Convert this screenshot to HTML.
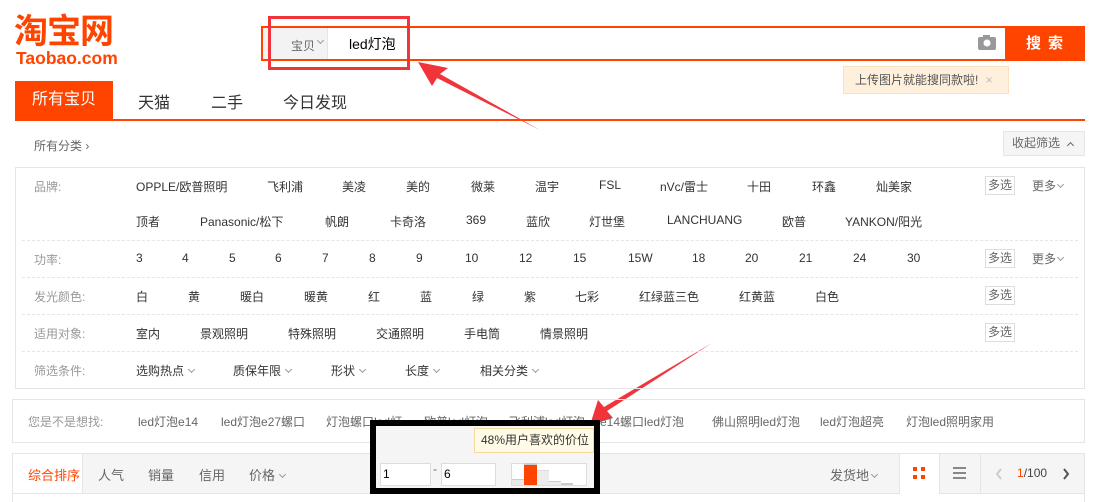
<!DOCTYPE html>
<html><head><meta charset="utf-8"><style>
*{margin:0;padding:0;box-sizing:border-box}
body{width:1095px;height:502px;overflow:hidden;background:#fff;font-family:"Liberation Sans","Noto Sans CJK SC",sans-serif;font-size:12px;color:#333;position:relative}
.a{position:absolute;white-space:nowrap}
.lbl{color:#999}
.dash{position:absolute;left:22px;width:1056px;border-top:1px dashed #e5e5e5}
.ms{position:absolute;left:985px;width:30px;height:19px;border:1px solid #ddd;color:#666;font-size:12px;line-height:17px;text-align:center}
.more{position:absolute;left:1032px;color:#666}
.dn{display:inline-block;width:5px;height:5px;border-right:1px solid #999;border-bottom:1px solid #999;transform:rotate(45deg);vertical-align:3px;margin-left:5px}
.up{display:inline-block;width:5px;height:5px;border-left:1px solid #666;border-top:1px solid #666;transform:rotate(45deg);vertical-align:-1px;margin-left:8px}
</style></head><body>
<!-- logo -->
<div class="a" style="left:14px;top:12px;font-size:34px;font-weight:bold;color:#ff4400;letter-spacing:-1px;line-height:40px">淘宝网</div>
<div class="a" style="left:16px;top:49px;font-size:17.5px;font-weight:bold;color:#ff4400;line-height:18px">Taobao.com</div>
<!-- search -->
<div class="a" style="left:261px;top:26px;width:745px;height:35px;border:2px solid #ff4400;border-right:none"></div>
<div class="a" style="left:263px;top:28px;width:65px;height:31px;background:#f3f3f3;border-right:1px solid #e5e5e5"></div>
<div class="a" style="left:291px;top:37px;color:#666;font-size:12px">宝贝</div>
<div class="a" style="left:318px;top:35px"><span class="dn" style="margin:0"></span></div>
<div class="a" style="left:349px;top:34px;font-size:14px;color:#000">led灯泡</div>
<svg class="a" style="left:978px;top:35px" width="18" height="15"><rect x="0" y="2" width="18" height="13" rx="2" fill="#999"/><rect x="5" y="0" width="7" height="4" fill="#999"/><circle cx="9" cy="8" r="3.5" fill="#fff"/></svg>
<div class="a" style="left:1005px;top:26px;width:80px;height:35px;background:#ff4400;color:#fff;font-size:15px;font-weight:bold;text-align:center;line-height:35px;letter-spacing:7px;padding-left:6px">搜索</div>
<div class="a" style="left:268px;top:16px;width:142px;height:54px;border:3px solid #f0343a"></div>
<div class="a" style="left:843px;top:66px;width:166px;height:28px;background:#fef0dc;border:1px solid #fbe0bb;color:#555;font-size:12px;line-height:26px;padding-left:11px">上传图片就能搜同款啦! <span style="color:#bbb;margin-left:4px">×</span></div>
<svg class="a" style="left:0;top:0" width="1095" height="502"><polygon points="418,62 448,68 440,74 540,130 437,78 432,86" fill="#f0343a"/><polygon points="590,425 598,400 604,407 712,343 607,411 613,418" fill="#f0343a"/></svg>
<!-- tabs -->
<div class="a" style="left:15px;top:81px;width:98px;height:40px;background:#ff4400;color:#fff;font-size:16px;text-align:center;line-height:38px">所有宝贝</div>
<div class="a" style="left:138px;top:89px;font-size:16px;color:#333">天猫</div>
<div class="a" style="left:211px;top:89px;font-size:16px;color:#333">二手</div>
<div class="a" style="left:283px;top:89px;font-size:16px;color:#333">今日发现</div>
<div class="a" style="left:15px;top:119px;width:1070px;height:2px;background:#ff4400"></div>
<div class="a" style="left:34px;top:137px;color:#666">所有分类 ›</div>
<div class="a" style="left:1003px;top:131px;width:82px;height:25px;background:#f5f5f5;border:1px solid #e5e5e5;color:#666;line-height:23px;padding-left:8px">收起筛选<span class="up"></span></div>
<!-- filter -->
<div class="a" style="left:15px;top:167px;width:1070px;height:222px;border:1px solid #e5e5e5"></div>
<div class="a lbl" style="left:34px;top:178px">品牌:</div>
<div class="a" style="left:136px;top:178px">OPPLE/欧普照明</div>
<div class="a" style="left:267px;top:178px">飞利浦</div>
<div class="a" style="left:342px;top:178px">美凌</div>
<div class="a" style="left:406px;top:178px">美的</div>
<div class="a" style="left:471px;top:178px">微莱</div>
<div class="a" style="left:535px;top:178px">温宇</div>
<div class="a" style="left:599px;top:178px">FSL</div>
<div class="a" style="left:660px;top:178px">nVc/雷士</div>
<div class="a" style="left:747px;top:178px">十田</div>
<div class="a" style="left:812px;top:178px">环鑫</div>
<div class="a" style="left:876px;top:178px">灿美家</div>
<div class="ms" style="top:176px">多选</div><div class="more" style="top:177px">更多<span class="dn" style="margin-left:2px"></span></div>
<div class="a" style="left:136px;top:213px">顶者</div>
<div class="a" style="left:200px;top:213px">Panasonic/松下</div>
<div class="a" style="left:325px;top:213px">帆朗</div>
<div class="a" style="left:390px;top:213px">卡奇洛</div>
<div class="a" style="left:466px;top:213px">369</div>
<div class="a" style="left:526px;top:213px">蓝欣</div>
<div class="a" style="left:589px;top:213px">灯世堡</div>
<div class="a" style="left:667px;top:213px">LANCHUANG</div>
<div class="a" style="left:782px;top:213px">欧普</div>
<div class="a" style="left:845px;top:213px">YANKON/阳光</div>
<div class="dash" style="top:240px"></div>
<div class="a lbl" style="left:34px;top:251px">功率:</div>
<div class="a" style="left:136px;top:251px">3</div><div class="a" style="left:182px;top:251px">4</div><div class="a" style="left:229px;top:251px">5</div><div class="a" style="left:275px;top:251px">6</div><div class="a" style="left:322px;top:251px">7</div><div class="a" style="left:369px;top:251px">8</div><div class="a" style="left:416px;top:251px">9</div><div class="a" style="left:465px;top:251px">10</div><div class="a" style="left:519px;top:251px">12</div><div class="a" style="left:573px;top:251px">15</div><div class="a" style="left:628px;top:251px">15W</div><div class="a" style="left:692px;top:251px">18</div><div class="a" style="left:745px;top:251px">20</div><div class="a" style="left:799px;top:251px">21</div><div class="a" style="left:853px;top:251px">24</div><div class="a" style="left:907px;top:251px">30</div>
<div class="ms" style="top:249px">多选</div><div class="more" style="top:250px">更多<span class="dn" style="margin-left:2px"></span></div>
<div class="dash" style="top:277px"></div>
<div class="a lbl" style="left:34px;top:288px">发光颜色:</div>
<div class="a" style="left:136px;top:288px">白</div><div class="a" style="left:188px;top:288px">黄</div><div class="a" style="left:240px;top:288px">暖白</div><div class="a" style="left:304px;top:288px">暖黄</div><div class="a" style="left:368px;top:288px">红</div><div class="a" style="left:420px;top:288px">蓝</div><div class="a" style="left:472px;top:288px">绿</div><div class="a" style="left:524px;top:288px">紫</div><div class="a" style="left:575px;top:288px">七彩</div><div class="a" style="left:639px;top:288px">红绿蓝三色</div><div class="a" style="left:739px;top:288px">红黄蓝</div><div class="a" style="left:815px;top:288px">白色</div>
<div class="ms" style="top:286px">多选</div>
<div class="dash" style="top:314px"></div>
<div class="a lbl" style="left:34px;top:325px">适用对象:</div>
<div class="a" style="left:136px;top:325px">室内</div><div class="a" style="left:200px;top:325px">景观照明</div><div class="a" style="left:288px;top:325px">特殊照明</div><div class="a" style="left:376px;top:325px">交通照明</div><div class="a" style="left:464px;top:325px">手电筒</div><div class="a" style="left:540px;top:325px">情景照明</div>
<div class="ms" style="top:323px">多选</div>
<div class="dash" style="top:351px"></div>
<div class="a lbl" style="left:34px;top:362px">筛选条件:</div>
<div class="a" style="left:136px;top:362px">选购热点<span class="dn"></span></div>
<div class="a" style="left:233px;top:362px">质保年限<span class="dn"></span></div>
<div class="a" style="left:331px;top:362px">形状<span class="dn"></span></div>
<div class="a" style="left:405px;top:362px">长度<span class="dn"></span></div>
<div class="a" style="left:480px;top:362px">相关分类<span class="dn"></span></div>
<!-- suggest -->
<div class="a" style="left:12px;top:399px;width:1073px;height:44px;border:1px solid #e5e5e5"></div>
<div class="a" style="left:28px;top:413px;color:#999">您是不是想找:</div>
<div class="a" style="left:138px;top:413px;color:#666">led灯泡e14</div>
<div class="a" style="left:221px;top:413px;color:#666">led灯泡e27螺口</div>
<div class="a" style="left:326px;top:413px;color:#666">灯泡螺口led灯</div>
<div class="a" style="left:424px;top:413px;color:#666">欧普led灯泡</div>
<div class="a" style="left:509px;top:413px;color:#666">飞利浦led灯泡</div>
<div class="a" style="left:600px;top:413px;color:#666">e14螺口led灯泡</div>
<div class="a" style="left:712px;top:413px;color:#666">佛山照明led灯泡</div>
<div class="a" style="left:820px;top:413px;color:#666">led灯泡超亮</div>
<div class="a" style="left:906px;top:413px;color:#666">灯泡led照明家用</div>
<!-- sort bar -->
<div class="a" style="left:12px;top:453px;width:1073px;height:49px;background:#f5f5f5;border:1px solid #e5e5e5"></div>
<div class="a" style="left:13px;top:454px;width:70px;height:40px;background:#fff;border-right:1px solid #e5e5e5"></div>
<div class="a" style="left:13px;top:493px;width:1072px;height:1px;background:#e5e5e5"></div>
<div class="a" style="left:13px;top:494px;width:1071px;height:8px;background:#fff"></div>
<div class="a" style="left:28px;top:465px;color:#ff4400;font-size:13px">综合排序</div>
<div class="a" style="left:98px;top:465px;color:#666;font-size:13px">人气</div>
<div class="a" style="left:148px;top:465px;color:#666;font-size:13px">销量</div>
<div class="a" style="left:199px;top:465px;color:#666;font-size:13px">信用</div>
<div class="a" style="left:249px;top:465px;color:#666;font-size:13px">价格<span class="dn"></span></div>
<div class="a" style="left:830px;top:465px;color:#666;font-size:13px">发货地<span class="dn" style="margin-left:3px"></span></div>
<div class="a" style="left:899px;top:454px;width:41px;height:40px;background:#fff;border-left:1px solid #e5e5e5;border-right:1px solid #e5e5e5"></div>
<svg class="a" style="left:913px;top:467px" width="13" height="13"><rect x="0" y="0" width="4" height="4" fill="#ff4400"/><rect x="8" y="0" width="4" height="4" fill="#ff4400"/><rect x="0" y="8" width="4" height="4" fill="#ff4400"/><rect x="8" y="8" width="4" height="4" fill="#ff4400"/></svg>
<div class="a" style="left:980px;top:454px;width:1px;height:40px;background:#e5e5e5"></div>
<svg class="a" style="left:953px;top:467px" width="14" height="13"><rect y="0" width="13" height="2" fill="#888"/><rect y="5" width="13" height="2" fill="#888"/><rect y="10" width="13" height="2" fill="#888"/></svg>
<svg class="a" style="left:995px;top:468px" width="8" height="12"><path d="M6 1 L2 6 L6 11" stroke="#ccc" stroke-width="2" fill="none"/></svg>
<div class="a" style="left:1017px;top:466px;color:#444"><span style="color:#ff4400">1</span>/100</div>
<svg class="a" style="left:1062px;top:468px" width="8" height="12"><path d="M2 1 L6 6 L2 11" stroke="#555" stroke-width="2" fill="none"/></svg>
<!-- price -->
<div class="a" style="left:370px;top:420px;width:230px;height:74px;border:6px solid #000"></div>
<div class="a" style="left:376px;top:426px;width:218px;height:62px;background:#f5f5f5"></div>
<div class="a" style="left:380px;top:463px;width:51px;height:23px;background:#fff;border:1px solid #ddd;color:#000;padding:3px 2px">1</div>
<div class="a" style="left:433px;top:462px;color:#666">-</div>
<div class="a" style="left:441px;top:463px;width:55px;height:23px;background:#fff;border:1px solid #ddd;color:#000;padding:3px 2px">6</div>
<div class="a" style="left:511px;top:463px;width:76px;height:23px;background:#fff;border:1px solid #ddd"></div>
<div class="a" style="left:512px;top:479px;width:12px;height:6px;background:#e8e8e8;border-top:1px solid #ccc"></div>
<div class="a" style="left:524px;top:463px;width:13px;height:22px;background:#ff4400;border-top:2px solid #ccc"></div>
<div class="a" style="left:537px;top:470px;width:12px;height:15px;background:#ececec;border-top:1px solid #ddd"></div>
<div class="a" style="left:549px;top:481px;width:12px;height:4px;background:#ececec;border-top:1px solid #ccc"></div>
<div class="a" style="left:561px;top:483px;width:12px;height:2px;background:#ccc"></div>
<div class="a" style="left:474px;top:428px;width:120px;height:25px;background:#fffbe6;border:1px solid #f8d9a0;color:#333;line-height:23px;padding-left:6px">48%用户喜欢的价位</div>
</body></html>
